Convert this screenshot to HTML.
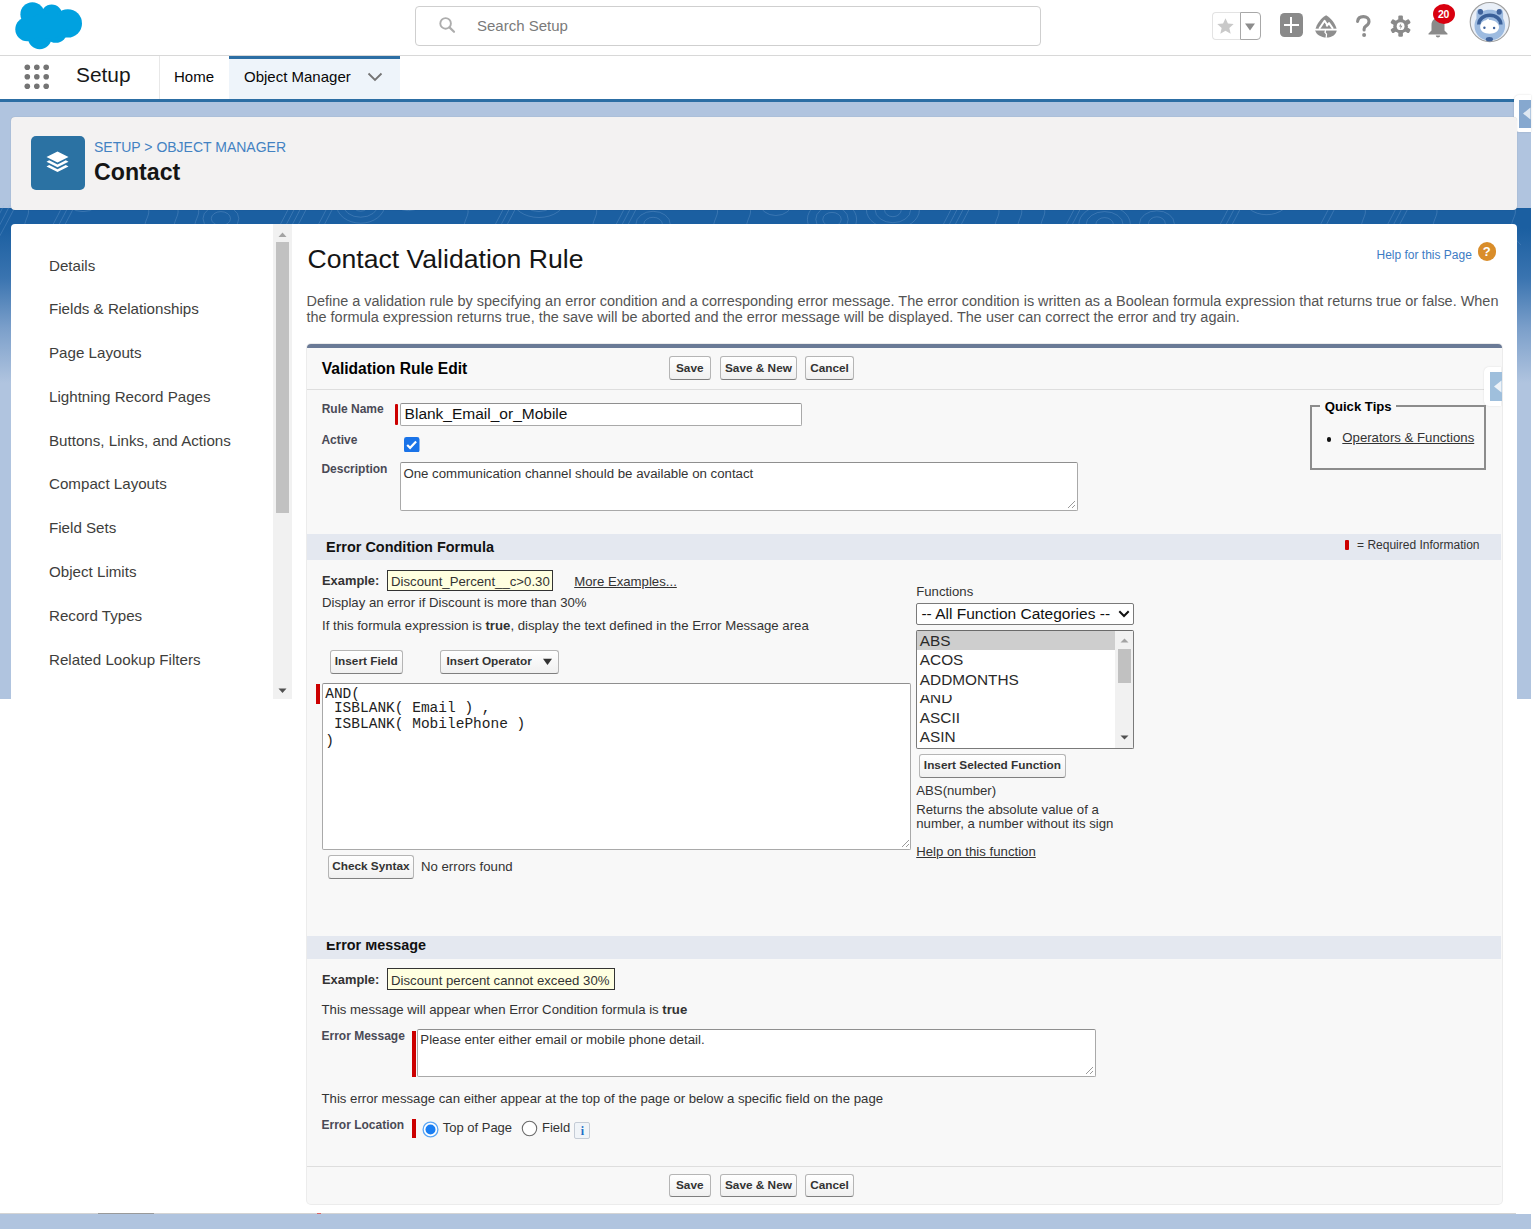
<!DOCTYPE html>
<html><head><meta charset="utf-8">
<style>
*{box-sizing:border-box;margin:0;padding:0}
html,body{width:1536px;height:1230px;overflow:hidden;background:#fff}
body{position:relative;font-family:"Liberation Sans",sans-serif;color:#080707}
.a{position:absolute;white-space:nowrap;line-height:1}
.b{font-weight:bold}
/* header */
#hdr{position:absolute;left:0;top:0;width:1531px;height:56px;background:#fff;border-bottom:1px solid #d8d8d8}
#nav{position:absolute;left:0;top:56px;width:1531px;height:43px;background:#fff}
#navline{position:absolute;left:0;top:99px;width:1531px;height:3px;background:#2c6ea4}
#bg{position:absolute;left:0;top:102px;width:1531px;height:597px;background:#b0c4df}
#band{position:absolute;left:0;top:208px;width:1531px;height:180px;background:linear-gradient(to bottom,#1b5fa1 0px,#1b5fa1 20px,#3a74b0 70px,#7b9fca 120px,#b0c4df 175px)}
#card{position:absolute;left:11px;top:117px;width:1505.5px;height:92.5px;background:#f3f2f2;border-radius:4px;box-shadow:0 0 1px rgba(0,0,0,.25)}
#side{position:absolute;left:11px;top:224px;width:281px;height:475px;background:#fff;border-top-left-radius:4px}
#main{position:absolute;left:292px;top:224px;width:1225px;height:475px;background:#fff;border-top-right-radius:4px}
#mainlow{position:absolute;left:306px;top:699px;width:1195px;height:505px;background:#f8f8f8}
.side a{color:#3e3e3c;text-decoration:none}
.lbl{font-size:12px;font-weight:bold;color:#4a4a56}
.txt{font-size:13.2px;color:#080707}
.btn{position:absolute;border:1px solid #b5b5b5;border-bottom-color:#7f7f7f;border-radius:3px;background:linear-gradient(#fff,#f0f0f0);font-size:11.8px;font-weight:bold;color:#333;text-align:center;white-space:nowrap}
</style></head>
<body>
<div id="hdr"></div>
<svg class="a" style="left:0;top:0" width="100" height="56" viewBox="0 0 100 56">
<g fill="#00a1e0">
<circle cx="32.4" cy="14.3" r="12"/>
<circle cx="51.7" cy="15.3" r="10.7"/>
<circle cx="67.8" cy="23.4" r="14.2"/>
<circle cx="55.8" cy="31.3" r="11.5"/>
<circle cx="39.7" cy="37.4" r="11.8"/>
<circle cx="27.3" cy="29.2" r="12"/>
<ellipse cx="47" cy="26" rx="20" ry="13"/>
</g></svg>
<div class="a" style="left:415px;top:6px;width:626px;height:40px;border:1px solid #cfcfcf;border-radius:4px;background:#fff"></div>
<svg class="a" style="left:438px;top:16px" width="18" height="18" viewBox="0 0 18 18"><circle cx="7.6" cy="7.4" r="5.3" fill="none" stroke="#adadad" stroke-width="1.9"/><line x1="11.5" y1="11.4" x2="16" y2="15.8" stroke="#adadad" stroke-width="2.2" stroke-linecap="round"/></svg>
<div class="a" style="left:477px;top:17.8px;font-size:15px;color:#7a7a7a">Search Setup</div>
<!-- favorites -->
<div class="a" style="left:1212px;top:12px;width:28px;height:28px;border:1px solid #e3e3e3;border-right:none;border-radius:4px 0 0 4px;background:#fff"></div>
<div class="a" style="left:1240px;top:12px;width:21px;height:28px;border:1px solid #a8a8a8;border-radius:0 4px 4px 0;background:#fff"></div>
<svg class="a" style="left:1216px;top:17px" width="19" height="18" viewBox="0 0 24 23"><path d="M12 1.5l3.1 6.9 7.4.7-5.6 5 1.7 7.4L12 17.6l-6.6 3.9 1.7-7.4-5.6-5 7.4-.7z" fill="#c9c9c9"/></svg>
<svg class="a" style="left:1244px;top:23px" width="12" height="8" viewBox="0 0 12 8"><path d="M1 0.5h10L6 7.5z" fill="#8c8c8c"/></svg>
<!-- plus -->
<div class="a" style="left:1279.5px;top:13px;width:23.5px;height:23.5px;border-radius:4.5px;background:#8a8a8a"></div>
<div class="a" style="left:1283.5px;top:23.6px;width:15.5px;height:2.6px;background:#fff"></div>
<div class="a" style="left:1289.9px;top:17px;width:2.6px;height:15.5px;background:#fff"></div>
<!-- trailhead -->
<svg class="a" style="left:1310px;top:10px" width="32" height="32" viewBox="0 0 32 32">
<path d="M16.1 5.2C12 7.5 6.5 13 5.2 20.3 6 24.5 11 27.6 16.6 27.6 22 27.6 26.5 24.5 26.8 19.8 25.5 13 20 7.5 16.1 5.2z" fill="#8e8e8e"/>
<path d="M9.2 18.9L14.6 10.8 17.4 15.3M16.4 16.4L19 13.1 23 18.9" fill="none" stroke="#fff" stroke-width="1.9" stroke-linejoin="round"/>
<path d="M4.5 19.6h23" stroke="#fff" stroke-width="1.9"/>
<path d="M15.6 20.2l-.6 2.2 1.5 1.8-.3 3.6" fill="none" stroke="#fff" stroke-width="1.3"/>
</svg>
<!-- ? -->
<svg class="a" style="left:1355px;top:15px" width="17" height="23" viewBox="0 0 17 23"><path d="M2.6 6.4C2.9 3.2 5.3 1.6 8.4 1.6c3.3 0 5.6 2 5.6 4.8 0 2.3-1.3 3.4-2.9 4.5-1.4.9-2 1.6-2 3.2v.8" fill="none" stroke="#8c8c8c" stroke-width="3.1" stroke-linecap="round"/><circle cx="9.1" cy="20" r="2" fill="#8c8c8c"/></svg>
<!-- gear -->
<svg class="a" style="left:1390px;top:14.5px" width="22" height="23" viewBox="0 0 22 23">
<g transform="translate(10.6 11.2)" fill="#8a8a8a">
<circle r="7.3"/>
<g id="tooth"><rect x="-2.3" y="-10.6" width="4.6" height="5" rx="1.2"/></g>
<rect x="-2.3" y="-10.6" width="4.6" height="5" rx="1.2" transform="rotate(60)"/>
<rect x="-2.3" y="-10.6" width="4.6" height="5" rx="1.2" transform="rotate(120)"/>
<rect x="-2.3" y="-10.6" width="4.6" height="5" rx="1.2" transform="rotate(180)"/>
<rect x="-2.3" y="-10.6" width="4.6" height="5" rx="1.2" transform="rotate(240)"/>
<rect x="-2.3" y="-10.6" width="4.6" height="5" rx="1.2" transform="rotate(300)"/>
<circle r="3.9" fill="#fff"/>
<path d="M0.6 -3l-2.2 3.4h1.7l-0.6 2.8 2.3-3.6h-1.7z" fill="#8a8a8a"/>
</g></svg>
<!-- bell -->
<svg class="a" style="left:1426px;top:16px" width="24" height="22" viewBox="0 0 24 22"><path d="M12 2c-4 0-6.5 3-6.5 7v5.5L2.5 17.5v1h19v-1L18.5 14.5V9c0-4-2.5-7-6.5-7z" fill="#8a8a8a"/><path d="M9.8 19.5h4.4c0 1.3-1 2-2.2 2s-2.2-.7-2.2-2z" fill="#8a8a8a"/></svg>
<div class="a" style="left:1432.5px;top:4px;width:22px;height:20px;border-radius:50%;background:#d9000f"></div>
<div class="a b" style="left:1432.5px;top:8.5px;width:22px;text-align:center;font-size:10.5px;color:#fff;letter-spacing:-0.3px">20</div>
<!-- avatar -->
<svg class="a" style="left:1464px;top:0" width="50" height="46" viewBox="0 0 50 46">
<circle cx="25.8" cy="22.1" r="19.6" fill="#e9eff7" stroke="#a0a0a0" stroke-width="1.1"/>
<path transform="translate(25.8 0) scale(0.9 1) translate(-25.8 0)" d="M11 13.5c0-3 1.6-4.4 3.3-4.4 1.4 0 2.4 1 3 2.3 2.2-1.1 5-1.6 8.5-1.6s6.3.5 8.5 1.6c.6-1.3 1.6-2.3 3-2.3 1.7 0 3.3 1.4 3.3 4.4v5c1.6 2.4 2.2 5 2.2 7.5 0 8.5-7.5 14.5-17 14.5S8.8 34.5 8.8 26c0-2.5.6-5.1 2.2-7.5z" fill="#9dbbe0"/>
<ellipse cx="16.5" cy="11.8" rx="2.6" ry="2.9" fill="#3f639c"/><ellipse cx="35.2" cy="11.8" rx="2.6" ry="2.9" fill="#3f639c"/>
<path d="M14.8 24.5c0-5.5 4.8-9.3 11-9.3s11 3.8 11 9.3" fill="none" stroke="#3a6099" stroke-width="3.6"/>
<path d="M16.2 27c0-3.8 2.5-6.2 5.8-6.8l2.2-1.8 1 1.5c4.6 0 9.8 2.6 9.8 7.1 0 4.2-4.3 6.7-9.4 6.7s-9.4-2.5-9.4-6.7z" fill="#fff"/>
<circle cx="20.4" cy="27.7" r="1.2" fill="#3f639c"/><circle cx="30.1" cy="28" r="1.2" fill="#3f639c"/>
<ellipse cx="25.4" cy="39.2" rx="3.6" ry="2.2" fill="#3f639c"/>
</svg>
<div id="nav"></div>
<svg class="a" style="left:22px;top:62px" width="30" height="30" viewBox="0 0 30 30"><g fill="#747474">
<circle cx="5.3" cy="5.3" r="2.8"/><circle cx="14.8" cy="5.3" r="2.8"/><circle cx="24.2" cy="5.3" r="2.8"/>
<circle cx="5.3" cy="14.8" r="2.8"/><circle cx="14.8" cy="14.8" r="2.8"/><circle cx="24.2" cy="14.8" r="2.8"/>
<circle cx="5.3" cy="24.2" r="2.8"/><circle cx="14.8" cy="24.2" r="2.8"/><circle cx="24.2" cy="24.2" r="2.8"/></g></svg>
<div class="a" style="left:76px;top:65.2px;font-size:20.9px;color:#181818">Setup</div>
<div class="a" style="left:159px;top:56px;width:1px;height:43px;background:#e8e8e8"></div>
<div class="a" style="left:174px;top:68.8px;font-size:15px;color:#080707">Home</div>
<div class="a" style="left:229px;top:56px;width:171px;height:43px;background:#eef4fa;border-top:3px solid #2c6ea4"></div>
<div class="a" style="left:244px;top:68.8px;font-size:15px;color:#080707">Object Manager</div>
<svg class="a" style="left:367px;top:72px" width="16" height="10" viewBox="0 0 16 10"><path d="M1.5 1.5l6.5 6.5 6.5-6.5" fill="none" stroke="#747474" stroke-width="1.8"/></svg>
<div id="navline"></div>
<div id="bg"></div>
<div id="band"></div>
<svg class="a" style="left:0;top:0" width="1531" height="700" viewBox="0 0 1531 700"><defs><linearGradient id="fd" x1="0" y1="0" x2="0" y2="1"><stop offset="0" stop-color="#fff" stop-opacity="1"/><stop offset="1" stop-color="#fff" stop-opacity="0"/></linearGradient><mask id="mk"><rect x="0" y="200" width="1531" height="200" fill="url(#fd)"/></mask></defs><g mask="url(#mk)" fill="none" stroke="#8fb6e0" stroke-opacity="0.32" stroke-width="0.9"><path d="M-8.0 205 Q -18.0 225 -32.0 250"/><path d="M-2.0 205 Q -12.0 225 -26.0 250"/><path d="M4.0 205 Q -6.0 225 -20.0 250"/><path d="M10.0 205 Q 0.0 225 -14.0 250"/><path d="M16.0 205 Q 6.0 225 -8.0 250"/><path d="M19.0 200 C 44.0 215 9.0 220 34.0 245"/><path d="M63.1 205 Q 53.1 225 39.1 250"/><path d="M69.1 205 Q 59.1 225 45.1 250"/><path d="M75.1 205 Q 65.1 225 51.1 250"/><ellipse cx="83.0" cy="198.6" rx="9.8" ry="7.0"/><ellipse cx="83.0" cy="198.6" rx="17.2" ry="13.0"/><path d="M139.3 200 C 164.3 215 129.3 220 154.3 245"/><path d="M168.6 200 C 193.6 215 158.6 220 183.6 245"/><path d="M189.2 200 C 214.2 215 179.2 220 204.2 245"/><ellipse cx="220.9" cy="218.6" rx="9.6" ry="7.0"/><ellipse cx="220.9" cy="218.6" rx="17.9" ry="13.0"/><path d="M290.4 205 Q 280.4 225 266.4 250"/><path d="M296.4 205 Q 286.4 225 272.4 250"/><path d="M302.4 205 Q 292.4 225 278.4 250"/><path d="M308.4 205 Q 298.4 225 284.4 250"/><path d="M328.5 205 Q 318.5 225 304.5 250"/><path d="M334.5 205 Q 324.5 225 310.5 250"/><ellipse cx="360.6" cy="204.2" rx="8.1" ry="7.0"/><ellipse cx="360.6" cy="204.2" rx="17.7" ry="13.0"/><ellipse cx="360.6" cy="204.2" rx="24.3" ry="19.0"/><ellipse cx="408.3" cy="197.7" rx="10.5" ry="7.0"/><ellipse cx="408.3" cy="197.7" rx="16.0" ry="13.0"/><path d="M458.6 200 C 483.6 215 448.6 220 473.6 245"/><path d="M505.3 205 Q 495.3 225 481.3 250"/><path d="M511.3 205 Q 501.3 225 487.3 250"/><path d="M517.3 205 Q 507.3 225 493.3 250"/><ellipse cx="538.9" cy="198.5" rx="8.0" ry="7.0"/><ellipse cx="538.9" cy="198.5" rx="17.2" ry="13.0"/><ellipse cx="538.9" cy="198.5" rx="26.8" ry="19.0"/><path d="M587.2 200 C 612.2 215 577.2 220 602.2 245"/><path d="M626.2 205 Q 616.2 225 602.2 250"/><path d="M632.2 205 Q 622.2 225 608.2 250"/><path d="M638.2 205 Q 628.2 225 614.2 250"/><ellipse cx="653.1" cy="224.3" rx="9.3" ry="7.0"/><ellipse cx="653.1" cy="224.3" rx="17.2" ry="13.0"/><path d="M708.0 200 C 733.0 215 698.0 220 723.0 245"/><path d="M741.0 200 C 766.0 215 731.0 220 756.0 245"/><ellipse cx="775.9" cy="202.5" rx="8.1" ry="7.0"/><ellipse cx="775.9" cy="202.5" rx="16.4" ry="13.0"/><ellipse cx="832.0" cy="219.4" rx="9.2" ry="7.0"/><ellipse cx="832.0" cy="219.4" rx="16.2" ry="13.0"/><ellipse cx="832.0" cy="219.4" rx="24.6" ry="19.0"/><ellipse cx="892.9" cy="209.7" rx="8.4" ry="7.0"/><ellipse cx="892.9" cy="209.7" rx="17.8" ry="13.0"/><ellipse cx="892.9" cy="209.7" rx="26.5" ry="19.0"/><path d="M953.3 205 Q 943.3 225 929.3 250"/><path d="M959.3 205 Q 949.3 225 935.3 250"/><path d="M965.3 205 Q 955.3 225 941.3 250"/><path d="M971.3 205 Q 961.3 225 947.3 250"/><path d="M989.5 200 C 1014.5 215 979.5 220 1004.5 245"/><path d="M1012.3 200 C 1037.3 215 1002.3 220 1027.3 245"/><path d="M1035.3 200 C 1060.3 215 1025.3 220 1050.3 245"/><path d="M1076.3 205 Q 1066.3 225 1052.3 250"/><path d="M1082.3 205 Q 1072.3 225 1058.3 250"/><ellipse cx="1104.6" cy="224.6" rx="8.8" ry="7.0"/><ellipse cx="1104.6" cy="224.6" rx="18.5" ry="13.0"/><ellipse cx="1104.6" cy="224.6" rx="25.8" ry="19.0"/><ellipse cx="1156.9" cy="223.8" rx="8.4" ry="7.0"/><ellipse cx="1156.9" cy="223.8" rx="17.4" ry="13.0"/><path d="M1230.2 205 Q 1220.2 225 1206.2 250"/><path d="M1236.2 205 Q 1226.2 225 1212.2 250"/><path d="M1242.2 205 Q 1232.2 225 1218.2 250"/><ellipse cx="1266.6" cy="195.7" rx="9.2" ry="7.0"/><ellipse cx="1266.6" cy="195.7" rx="16.7" ry="13.0"/><ellipse cx="1266.6" cy="195.7" rx="24.1" ry="19.0"/><path d="M1330.6 205 Q 1320.6 225 1306.6 250"/><path d="M1336.6 205 Q 1326.6 225 1312.6 250"/><path d="M1355.9 200 C 1380.9 215 1345.9 220 1370.9 245"/><path d="M1397.7 205 Q 1387.7 225 1373.7 250"/><path d="M1403.7 205 Q 1393.7 225 1379.7 250"/><path d="M1409.7 205 Q 1399.7 225 1385.7 250"/><path d="M1427.5 200 C 1452.5 215 1417.5 220 1442.5 245"/><ellipse cx="1452.9" cy="196.3" rx="9.4" ry="7.0"/><ellipse cx="1452.9" cy="196.3" rx="18.2" ry="13.0"/><path d="M1505.9 200 C 1530.9 215 1495.9 220 1520.9 245"/><path d="M1534.0 200 C 1559.0 215 1524.0 220 1549.0 245"/></g></svg>
<div class="a" style="left:1514px;top:95px;width:17px;height:37px;background:#fff;border-radius:5px 0 0 5px;box-shadow:0 0 2px rgba(0,0,0,.15)"></div>
<div class="a" style="left:1518.5px;top:99.5px;width:12.5px;height:28.5px;background:#86a8cf"></div>
<svg class="a" style="left:1522px;top:107px" width="9" height="13" viewBox="0 0 9 13"><path d="M8.5 0.5v12L1 6.5z" fill="#dfe8f2"/></svg>
<div id="card"></div>
<div class="a" style="left:30.5px;top:136px;width:54px;height:54px;border-radius:5px;background:#2b72a3"></div>
<svg class="a" style="left:45px;top:150px" width="25" height="25" viewBox="0 0 25 25">
<path d="M12.5 1.5L23.5 7 12.5 12.5 1.5 7z" fill="#fff"/>
<path d="M4.2 10.3L1.5 11.7 12.5 17.2 23.5 11.7 20.8 10.3 12.5 14.5z" fill="#fff"/>
<path d="M4.2 15L1.5 16.4 12.5 21.9 23.5 16.4 20.8 15 12.5 19.2z" fill="#fff"/>
</svg>
<div class="a" style="left:94px;top:140px;font-size:14px;color:#4382c2">SETUP &gt; OBJECT MANAGER</div>
<div class="a b" style="left:94px;top:160.5px;font-size:23.2px;color:#151515">Contact</div>
<div id="side"></div>
<div class="side">
<div class="a" style="left:49px;top:257.8px;font-size:15.15px;color:#3e3e3c">Details</div>
<div class="a" style="left:49px;top:301.2px;font-size:15.15px;color:#3e3e3c">Fields &amp; Relationships</div>
<div class="a" style="left:49px;top:345px;font-size:15.15px;color:#3e3e3c">Page Layouts</div>
<div class="a" style="left:49px;top:388.8px;font-size:15.15px;color:#3e3e3c">Lightning Record Pages</div>
<div class="a" style="left:49px;top:432.6px;font-size:15.15px;color:#3e3e3c">Buttons, Links, and Actions</div>
<div class="a" style="left:49px;top:476.4px;font-size:15.15px;color:#3e3e3c">Compact Layouts</div>
<div class="a" style="left:49px;top:520.2px;font-size:15.15px;color:#3e3e3c">Field Sets</div>
<div class="a" style="left:49px;top:564px;font-size:15.15px;color:#3e3e3c">Object Limits</div>
<div class="a" style="left:49px;top:607.8px;font-size:15.15px;color:#3e3e3c">Record Types</div>
<div class="a" style="left:49px;top:651.6px;font-size:15.15px;color:#3e3e3c">Related Lookup Filters</div>
</div>
<div class="a" style="left:273px;top:224px;width:19px;height:475px;background:#f1f1f1"></div>
<div class="a" style="left:276px;top:242px;width:12.5px;height:271px;background:#c1c1c1"></div>
<svg class="a" style="left:276px;top:229px" width="13" height="10" viewBox="0 0 13 10"><path d="M2.5 8h8L6.5 3.5z" fill="#a3a3a3"/></svg>
<svg class="a" style="left:276px;top:686px" width="13" height="10" viewBox="0 0 13 10"><path d="M2.5 2.5h8L6.5 7z" fill="#505050"/></svg>
<div id="main"></div>
<div class="a" style="left:307.5px;top:246px;font-size:26.6px;color:#151515">Contact Validation Rule</div>
<div class="a" style="left:1376.5px;top:248.5px;font-size:12px;color:#3d7cc4">Help for this Page</div>
<div class="a" style="left:1477.5px;top:242px;width:18.5px;height:18.5px;border-radius:50%;background:#d98d2a"></div>
<div class="a b" style="left:1477.5px;top:245px;width:18.5px;text-align:center;font-size:13px;color:#fff">?</div>
<div class="a" style="left:306.5px;top:293px;width:1200px;font-size:14.46px;line-height:16.3px;color:#545454;white-space:normal">Define a validation rule by specifying an error condition and a corresponding error message. The error condition is written as a Boolean formula expression that returns true or false. When the formula expression returns true, the save will be aborted and the error message will be displayed. The user can correct the error and try again.</div>
<!-- form panel -->
<div id="panel" class="a" style="left:306.5px;top:344px;width:1195px;height:860px;background:#f8f8f8;border-top:4px solid #6a7a96;border-radius:4px;box-shadow:0 0 0 1px #ececec"></div>
<div class="a b" style="left:321.7px;top:360.99px;font-size:15.6px;color:#000;">Validation Rule Edit</div>
<div class="btn" style="left:668.5px;top:356.2px;width:42.5px;height:24.1px;line-height:22.1px;">Save</div>
<div class="btn" style="left:720.2px;top:356.2px;width:76.5px;height:24.1px;line-height:22.1px;">Save &amp; New</div>
<div class="btn" style="left:805.2px;top:356.2px;width:48.7px;height:24.1px;line-height:22.1px;">Cancel</div>
<div class="a" style="left:306.5px;top:389px;width:1194.5px;height:1px;background:#dedede"></div>
<div class="a b" style="left:321.7px;top:403.44px;font-size:12px;color:#4a4a56;">Rule Name</div>
<div class="a" style="left:394.6px;top:404px;width:3.9px;height:21px;background:#c00;border-radius:1px"></div>
<div class="a" style="left:400px;top:403px;width:402.4px;height:22.5px;background:#fff;border:1px solid #a9a9a9;border-top-color:#8f8f8f;border-radius:2px"></div>
<div class="a" style="left:404.6px;top:406.38px;font-size:15.5px;color:#111;">Blank_Email_or_Mobile</div>
<div class="a b" style="left:321.4px;top:434.24px;font-size:12px;color:#4a4a56;">Active</div>
<svg class="a" style="left:404px;top:436.5px" width="15.5" height="15.5" viewBox="0 0 16 16"><rect x="0" y="0" width="16" height="16" rx="2.5" fill="#1a73e8"/><path d="M3.3 8.2l3 3 6.2-6.5" fill="none" stroke="#fff" stroke-width="2.2"/></svg>
<div class="a b" style="left:321.4px;top:463.24px;font-size:12px;color:#4a4a56;">Description</div>
<div class="a" style="left:399.8px;top:462.2px;width:678.2px;height:48.8px;background:#fff;border:1px solid #a9a9a9;border-top-color:#8f8f8f;border-radius:2px"></div>
<div class="a" style="left:403.4px;top:467.38px;font-size:13.25px;color:#333;">One communication channel should be available on contact</div>
<svg class="a" style="left:1066px;top:499px" width="10" height="10" viewBox="0 0 10 10"><path d="M9 2L2 9M9 6L6 9" stroke="#9a9a9a" stroke-width="1"/></svg>
<div class="a" style="left:1309.8px;top:405.4px;width:176.4px;height:64.4px;border:2px solid #8c8c8c"></div>
<div class="a" style="left:1320px;top:400px;width:76px;height:12px;background:#f8f8f8"></div>
<div class="a b" style="left:1324.7px;top:400.17px;font-size:13.15px;color:#000;">Quick Tips</div>
<div class="a" style="left:1326.6px;top:437.4px;width:4.2px;height:4.2px;background:#111;border-radius:50%"></div>
<div class="a" style="left:1342.3px;top:431.33px;font-size:13.2px;color:#333;text-decoration:underline">Operators &amp; Functions</div>
<div class="a" style="left:306.5px;top:534px;width:1194.5px;height:25.5px;background:#e4e8f0"></div>
<div class="a b" style="left:326px;top:539.85px;font-size:14.47px;color:#111;">Error Condition Formula</div>
<div class="a" style="left:1344.5px;top:539.8px;width:4.0px;height:10.6px;background:#c00;border-radius:1px"></div>
<div class="a" style="left:1357.1px;top:538.84px;font-size:12px;color:#333;">= Required Information</div>
<div class="a b" style="left:322px;top:574.98px;font-size:12.9px;color:#333;">Example:</div>
<div class="a" style="left:386.7px;top:570px;width:166.7px;height:21px;background:#ffffe0;border:1px solid #333"></div>
<div class="a" style="left:391px;top:574.73px;font-size:13.2px;color:#333;">Discount_Percent__c&gt;0.30</div>
<div class="a" style="left:574.2px;top:574.73px;font-size:13.2px;color:#333;text-decoration:underline">More Examples...</div>
<div class="a" style="left:322px;top:595.58px;font-size:13.2px;color:#333;">Display an error if Discount is more than 30%</div>
<div class="a" style="left:322px;top:618.53px;font-size:13.2px;color:#333;">If this formula expression is <b>true</b>, display the text defined in the Error Message area</div>
<div class="btn" style="left:330px;top:650.2px;width:72.6px;height:23.8px;line-height:21.8px;">Insert Field</div>
<div class="btn" style="left:439.5px;top:650.2px;width:119.7px;height:23.8px;line-height:21.8px;text-align:left;padding-left:6px">Insert Operator</div>
<svg class="a" style="left:542px;top:657.5px" width="11" height="8" viewBox="0 0 11 8"><path d="M1 0.8h9L5.5 7z" fill="#333"/></svg>
<div class="a" style="left:316.4px;top:684px;width:3.8px;height:19.5px;background:#c00"></div>
<div class="a" style="left:321.5px;top:683.2px;width:589.8px;height:167.1px;background:#fff;border:1px solid #a9a9a9;border-top-color:#8f8f8f;border-radius:2px"></div>
<div class="a" style="left:325.2px;top:686.83px;font-family:&quot;Liberation Mono&quot;,monospace;font-size:14.5px;color:#222;white-space:pre">AND(</div>
<div class="a" style="left:325.2px;top:700.83px;font-family:&quot;Liberation Mono&quot;,monospace;font-size:14.5px;color:#222;white-space:pre"> ISBLANK( Email ) ,</div>
<div class="a" style="left:325.2px;top:717.33px;font-family:&quot;Liberation Mono&quot;,monospace;font-size:14.5px;color:#222;white-space:pre"> ISBLANK( MobilePhone )</div>
<div class="a" style="left:325.2px;top:734.23px;font-family:&quot;Liberation Mono&quot;,monospace;font-size:14.5px;color:#222;white-space:pre">)</div>
<svg class="a" style="left:900px;top:838px" width="10" height="10" viewBox="0 0 10 10"><path d="M9 2L2 9M9 6L6 9" stroke="#9a9a9a" stroke-width="1"/></svg>
<div class="btn" style="left:327.5px;top:855px;width:86.7px;height:23.7px;line-height:21.7px;">Check Syntax</div>
<div class="a" style="left:421px;top:860.13px;font-size:13.2px;color:#333;">No errors found</div>
<div class="a" style="left:916.25px;top:584.97px;font-size:13.15px;color:#333;">Functions</div>
<div class="a" style="left:916.25px;top:603px;width:217.75px;height:22px;background:#fff;border:1px solid #7a7a7a;border-radius:2px"></div>
<div class="a" style="left:921.4px;top:605.98px;font-size:15.5px;color:#111;">-- All Function Categories --</div>
<svg class="a" style="left:1118px;top:610px" width="12" height="8" viewBox="0 0 12 8"><path d="M1.3 1.3l4.7 4.7 4.7-4.7" fill="none" stroke="#111" stroke-width="2"/></svg>
<div class="a" style="left:916.25px;top:630px;width:217.75px;height:119px;background:#fff;border:1px solid #7a7a7a;border-top-color:#6a6a6a;border-radius:2px"></div>
<div class="a" style="left:917.25px;top:630.8px;width:197.75px;height:19.7px;background:#cecece"></div>
<div class="a" style="left:1115px;top:631px;width:18px;height:117px;background:#f1f1f1"></div>
<div class="a" style="left:1118.3px;top:648.75px;width:12.5px;height:34.65px;background:#c1c1c1"></div>
<svg class="a" style="left:1119px;top:636px" width="11" height="8" viewBox="0 0 11 8"><path d="M1.5 6.5h8L5.5 2.5z" fill="#a3a3a3"/></svg>
<svg class="a" style="left:1119px;top:734px" width="11" height="8" viewBox="0 0 11 8"><path d="M1.5 1.5h8L5.5 5.5z" fill="#505050"/></svg>
<div class="a" style="left:919.8px;top:632.55px;font-size:15.36px;color:#2a2a2a;">ABS</div>
<div class="a" style="left:919.8px;top:652.3px;font-size:15.36px;color:#2a2a2a;">ACOS</div>
<div class="a" style="left:919.8px;top:672.1px;font-size:15.36px;color:#2a2a2a;">ADDMONTHS</div>
<div class="a" style="left:919.8px;top:709.6px;font-size:15.36px;color:#2a2a2a;">ASCII</div>
<div class="a" style="left:919.8px;top:729.1px;font-size:15.36px;color:#2a2a2a;">ASIN</div>
<div class="a" style="left:917px;top:694.6px;width:190px;height:12px;overflow:hidden"><div class="a" style="left:2.8px;top:-4.5px;font-size:15.36px;color:#2a2a2a">AND</div></div>
<div class="btn" style="left:918.75px;top:754.4px;width:147.25px;height:23.9px;line-height:21.9px;">Insert Selected Function</div>
<div class="a" style="left:916.25px;top:783.73px;font-size:13.2px;color:#333;">ABS(number)</div>
<div class="a" style="left:916.25px;top:802.73px;font-size:13.2px;color:#333;">Returns the absolute value of a</div>
<div class="a" style="left:916.25px;top:816.53px;font-size:13.2px;color:#333;">number, a number without its sign</div>
<div class="a" style="left:916.25px;top:844.63px;font-size:13.2px;color:#333;text-decoration:underline">Help on this function</div>
<div class="a" style="left:306.5px;top:935.6px;width:1194.5px;height:23.2px;background:#e4e8f0"></div>
<div class="a" style="left:320px;top:942.2px;width:200px;height:16px;overflow:hidden"><div class="a b" style="left:6px;top:-3.79px;font-size:14.4px;color:#111">Error Message</div></div>
<div class="a b" style="left:322px;top:973.88px;font-size:12.9px;color:#333;">Example:</div>
<div class="a" style="left:387px;top:968.4px;width:227.5px;height:21.9px;background:#ffffe0;border:1px solid #333"></div>
<div class="a" style="left:391px;top:973.63px;font-size:13.2px;color:#333;">Discount percent cannot exceed 30%</div>
<div class="a" style="left:321.5px;top:1003.13px;font-size:13.2px;color:#333;">This message will appear when Error Condition formula is <b>true</b></div>
<div class="a b" style="left:321.5px;top:1029.84px;font-size:12px;color:#4a4a56;">Error Message</div>
<div class="a" style="left:412px;top:1030.7px;width:4.2px;height:46.3px;background:#c00"></div>
<div class="a" style="left:417px;top:1029.4px;width:679px;height:48.1px;background:#fff;border:1px solid #a9a9a9;border-top-color:#8f8f8f;border-radius:2px"></div>
<div class="a" style="left:420.3px;top:1032.88px;font-size:13.25px;color:#333;">Please enter either email or mobile phone detail.</div>
<svg class="a" style="left:1084px;top:1065px" width="10" height="10" viewBox="0 0 10 10"><path d="M9 2L2 9M9 6L6 9" stroke="#9a9a9a" stroke-width="1"/></svg>
<div class="a" style="left:321.5px;top:1092.23px;font-size:13.2px;color:#333;">This error message can either appear at the top of the page or below a specific field on the page</div>
<div class="a b" style="left:321.5px;top:1118.74px;font-size:12px;color:#4a4a56;">Error Location</div>
<div class="a" style="left:412px;top:1118.8px;width:4.2px;height:19.2px;background:#c00"></div>
<svg class="a" style="left:422px;top:1120.5px" width="17" height="17" viewBox="0 0 17 17"><circle cx="8.5" cy="8.5" r="7.4" fill="#fff" stroke="#5aa6f5" stroke-width="1.3"/><circle cx="8.5" cy="8.5" r="5" fill="#1a7ef2"/></svg>
<div class="a" style="left:442.7px;top:1121.1px;font-size:13px;color:#333;">Top of Page</div>
<svg class="a" style="left:520.8px;top:1120.4px" width="17" height="17" viewBox="0 0 17 17"><circle cx="8.5" cy="8.5" r="7.2" fill="#fff" stroke="#6a6a6a" stroke-width="1.1"/></svg>
<div class="a" style="left:542px;top:1121.1px;font-size:13px;color:#333;">Field</div>
<div class="a" style="left:574.3px;top:1122.3px;width:16.1px;height:16.5px;background:#f0f4f8;border:1px solid #c5ccd6;border-radius:2px"></div>
<div class="a b" style="left:574.3px;top:1124.5px;width:16px;text-align:center;font-family:&quot;Liberation Serif&quot;,serif;font-size:12px;color:#1f6fc6">i</div>
<div class="a" style="left:306.5px;top:1166px;width:1194.5px;height:1px;background:#dedede"></div>
<div class="btn" style="left:668.5px;top:1174.4px;width:42.5px;height:22.5px;line-height:20.5px;">Save</div>
<div class="btn" style="left:720.2px;top:1174.4px;width:76.5px;height:22.5px;line-height:20.5px;">Save &amp; New</div>
<div class="btn" style="left:805.2px;top:1174.4px;width:48.7px;height:22.5px;line-height:20.5px;">Cancel</div>
<div class="a" style="left:1483.7px;top:367.2px;width:17.3px;height:38.5px;background:#fff;border-radius:5px 0 0 5px;box-shadow:0 0 2px rgba(0,0,0,.12)"></div>
<div class="a" style="left:1489.5px;top:372px;width:12.5px;height:29.3px;background:#9fbfdc"></div>
<svg class="a" style="left:1493px;top:380px" width="9" height="13" viewBox="0 0 9 13"><path d="M8.5 0.5v12L1 6.5z" fill="#eef3f8"/></svg>
<div id="bottomstrip" style="position:absolute;left:0;top:1214px;width:1531px;height:15px;background:#b0c4df"></div>
<div class="a" style="left:0;top:1213px;width:1516px;height:1px;background:#d4d4d4"></div>
<div class="a" style="left:98px;top:1213px;width:56px;height:1px;background:#9a9a9a"></div>
<div class="a" style="left:317px;top:1213px;width:4px;height:1px;background:#d66"></div>
</body></html>
